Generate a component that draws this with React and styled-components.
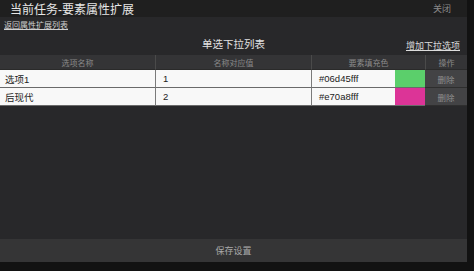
import React from 'react';
import styled, { createGlobalStyle } from 'styled-components';

const GlobalStyle = createGlobalStyle`
  html, body {
    margin: 0;
    padding: 0;
    background: #121212;
  }
  body {
    font-family: "Liberation Sans", "Noto Sans CJK SC", sans-serif;
  }
`;

const options = [
  { name: '选项1', value: '1', color: '#06d45fff', swatch: '#5bcf6b' },
  { name: '后现代', value: '2', color: '#e70a8fff', swatch: '#dc3497' },
];

const Panel = styled.div`
  width: 467px;
  height: 262px;
  background: #28282a;
  display: flex;
  flex-direction: column;
`;

const TitleBar = styled.div`
  height: 17px;
  background: #1f1f1f;
  display: flex;
  align-items: center;
  justify-content: space-between;
  padding: 0 16px 0 10px;
`;

const Title = styled.div`
  color: #e6e6e6;
  font-size: 12px;
`;

const Close = styled.div`
  color: #8a8a8a;
  font-size: 9px;
`;

const Body = styled.div`
  flex: 1;
  display: flex;
  flex-direction: column;
`;

const BackLink = styled.a`
  color: #cfcfcf;
  font-size: 8px;
  text-decoration: underline;
  padding: 3px 0 0 4px;
  height: 12px;
  line-height: 12px;
`;

const Heading = styled.div`
  height: 23px;
  display: flex;
  align-items: center;
  justify-content: center;
  position: relative;
`;

const HeadingText = styled.div`
  color: #e2e2e2;
  font-size: 10.5px;
  font-weight: 400;
`;

const AddLink = styled.a`
  position: absolute;
  right: 7px;
  top: 7px;
  color: #dcdcdc;
  font-size: 9px;
  text-decoration: underline;
`;

const Table = styled.div`
  display: grid;
  grid-template-columns: 155px 156px 84px 30px 42px;
`;

const HeadCell = styled.div`
  height: 14px;
  background: #343436;
  color: #8a8a8a;
  font-size: 8px;
  display: flex;
  align-items: center;
  justify-content: center;
  border-left: ${p => (p.first ? 'none' : '1px solid #4a4a4a')};
  grid-column: ${p => p.span || 'auto'};
  border-bottom: 1px solid #2a2a2a;
`;

const Cell = styled.div`
  height: 17px;
  background: #f8f8f8;
  color: #222;
  font-size: 9.5px;
  display: flex;
  align-items: center;
  padding-left: ${p => (p.first ? '5px' : '7px')};
  border-left: ${p => (p.first ? 'none' : '1px solid #7a7a7a')};
  border-bottom: 1px solid #6a6a6a;
`;

const Swatch = styled.div`
  height: 17px;
  border-bottom: 1px solid #6a6a6a;
`;

const DeleteCell = styled.button`
  height: 18px;
  background: #434345;
  color: #909090;
  font-family: inherit;
  font-size: 8.5px;
  border: none;
  border-bottom: 1px solid #2e2e2e;
  padding: 0;
`;

const Spacer = styled.div`
  flex: 1;
`;

const SaveButton = styled.button`
  height: 23px;
  background: #353536;
  color: #a9a9a9;
  border: none;
  font-family: inherit;
  font-size: 9px;
  padding: 0;
`;

export default function App() {
  return (
    <>
      <GlobalStyle />
      <Panel>
        <TitleBar>
          <Title>当前任务-要素属性扩展</Title>
          <Close>关闭</Close>
        </TitleBar>
        <Body>
          <BackLink>返回属性扩展列表</BackLink>
          <Heading>
            <HeadingText>单选下拉列表</HeadingText>
            <AddLink>增加下拉选项</AddLink>
          </Heading>
          <Table>
            <HeadCell first>选项名称</HeadCell>
            <HeadCell>名称对应值</HeadCell>
            <HeadCell span="span 2">要素填充色</HeadCell>
            <HeadCell>操作</HeadCell>
            {options.map(o => (
              <React.Fragment key={o.name}>
                <Cell first>{o.name}</Cell>
                <Cell>{o.value}</Cell>
                <Cell>{o.color}</Cell>
                <Swatch style={{ background: o.swatch }} />
                <DeleteCell>删除</DeleteCell>
              </React.Fragment>
            ))}
          </Table>
          <Spacer />
          <SaveButton>保存设置</SaveButton>
        </Body>
      </Panel>
    </>
  );
}
